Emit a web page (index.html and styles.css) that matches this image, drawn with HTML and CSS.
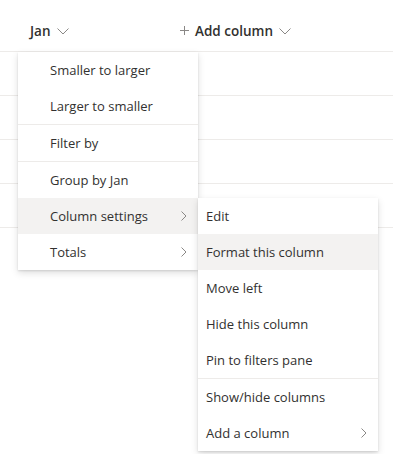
FILE: index.html
```html
<!DOCTYPE html>
<html>
<head>
<meta charset="utf-8">
<link rel="stylesheet" href="styles.css">
</head>
<body>
<div class="page">
  <div class="header">
    <div class="col col-jan">
      <span class="h-text">Jan</span>
      <svg class="chev-down" width="12" height="7" viewBox="0 0 12 7"><path d="M0.5 0.5 L6 6 L11.5 0.5" fill="none" stroke="#8a8886" stroke-width="1"/></svg>
    </div>
    <div class="col col-add">
      <svg class="plus" width="9" height="9" viewBox="0 0 9 9"><path d="M4.5 0 V9 M0 4.5 H9" stroke="#8a8886" stroke-width="1"/></svg>
      <span class="h-text">Add column</span>
      <svg class="chev-down" width="12" height="7" viewBox="0 0 12 7"><path d="M0.5 0.5 L6 6 L11.5 0.5" fill="none" stroke="#8a8886" stroke-width="1"/></svg>
    </div>
  </div>
  <div class="row"></div>
  <div class="row"></div>
  <div class="row"></div>
  <div class="row"></div>

  <div class="menu menu-main">
    <div class="item">Smaller to larger</div>
    <div class="item">Larger to smaller</div>
    <div class="divider"></div>
    <div class="item">Filter by</div>
    <div class="divider"></div>
    <div class="item">Group by Jan</div>
    <div class="item active">Column settings
      <svg class="chev-right" width="6" height="10" viewBox="0 0 6 10"><path d="M0.5 0.5 L5 5 L0.5 9.5" fill="none" stroke="#8a8886" stroke-width="1"/></svg>
    </div>
    <div class="item">Totals
      <svg class="chev-right" width="6" height="10" viewBox="0 0 6 10"><path d="M0.5 0.5 L5 5 L0.5 9.5" fill="none" stroke="#8a8886" stroke-width="1"/></svg>
    </div>
  </div>

  <div class="menu menu-sub">
    <div class="item">Edit</div>
    <div class="item active">Format this column</div>
    <div class="item">Move left</div>
    <div class="item">Hide this column</div>
    <div class="item">Pin to filters pane</div>
    <div class="divider"></div>
    <div class="item">Show/hide columns</div>
    <div class="item">Add a column
      <svg class="chev-right" width="6" height="10" viewBox="0 0 6 10"><path d="M0.5 0.5 L5 5 L0.5 9.5" fill="none" stroke="#8a8886" stroke-width="1"/></svg>
    </div>
  </div>
</div>
</body>
</html>
```
FILE: styles.css
```css
html, body {
  margin: 0;
  padding: 0;
  background: #ffffff;
}
body {
  font-family: "Open Sans", "Noto Sans", sans-serif;
  color: #323130;
  width: 393px;
  height: 454px;
  overflow: hidden;
}
.page {
  position: relative;
  width: 393px;
  height: 454px;
}
.header {
  display: flex;
  align-items: center;
  height: 52px;
  padding-top: 10px;
  border-bottom: 1px solid #edebe9;
  box-sizing: border-box;
}
.col {
  display: flex;
  align-items: center;
}
.col-jan {
  padding-left: 30px;
  width: 150px;
  gap: 7px;
}
.col-add {
  gap: 6px;
}
.h-text {
  font-size: 13.5px;
  font-weight: 600;
  color: #323130;
}
.chev-down {
  margin-top: 1px;
}
.row {
  height: 43px;
  border-bottom: 1px solid #edebe9;
}
.menu {
  position: absolute;
  width: 180px;
  background: #ffffff;
  box-shadow: 0 3.2px 7.2px rgba(0,0,0,0.132), 0 0.6px 1.8px rgba(0,0,0,0.108);
  display: flex;
  flex-direction: column;
}
.menu-main {
  left: 18px;
  top: 52px;
}
.menu-sub {
  left: 198px;
  top: 198px;
}
.item {
  height: 36px;
  display: flex;
  align-items: center;
  font-size: 13px;
  color: #323130;
  position: relative;
}
.menu-main .item {
  padding-left: 32px;
}
.menu-sub .item {
  padding-left: 8px;
}
.item.active {
  background: #f3f2f1;
}
.divider {
  height: 1px;
  background: #edebe9;
}
.chev-right {
  position: absolute;
  right: 11px;
  top: 13px;
}
```
